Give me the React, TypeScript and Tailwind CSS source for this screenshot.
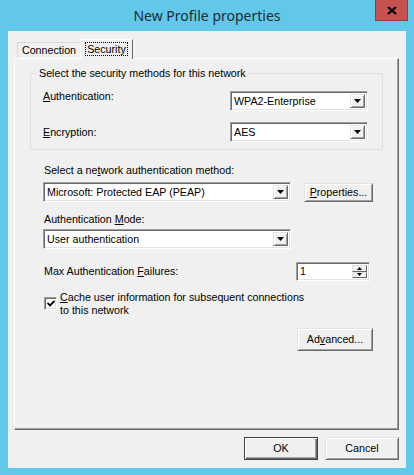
import React from "react";

const font = { fontFamily: '"Liberation Sans", Arial, sans-serif' };

function Arrow() {
  return (
    <svg width="7" height="4" viewBox="0 0 7 4">
      <path d="M0 0h7L3.5 4z" fill="#000" />
    </svg>
  );
}

function DropBtn() {
  return (
    <div className="w-[15px] h-full flex items-center justify-center bg-[#f0f0f0] border border-t-[#e3e3e3] border-l-[#e3e3e3] border-b-[#696969] border-r-[#696969] shadow-[inset_1px_1px_0_#fff,inset_-1px_-1px_0_#a0a0a0]">
      <Arrow />
    </div>
  );
}

function Combo({ text, w }: { text: string; w: string }) {
  return (
    <div
      className={`${w} h-[20px] flex items-stretch bg-white border border-t-[#a0a0a0] border-l-[#a0a0a0] border-b-white border-r-white shadow-[inset_1px_1px_0_#696969,inset_-1px_-1px_0_#e3e3e3] p-[2px]`}
    >
      <div className="flex-1 flex items-center pl-[1px] text-[10.7px] text-black leading-none">{text}</div>
      <DropBtn />
    </div>
  );
}

function Btn({ children, w, h, def }: { children: React.ReactNode; w: string; h: string; def?: boolean }) {
  return (
    <div
      className={`${w} ${h} flex items-center justify-center text-[10.7px] text-black bg-[#f0f0f0] border ${
        def
          ? "border-[#404040] shadow-[inset_1px_1px_0_#fff,inset_-1px_-1px_0_#696969,inset_-2px_-2px_0_#a0a0a0]"
          : "border-t-[#e3e3e3] border-l-[#e3e3e3] border-b-[#696969] border-r-[#696969] shadow-[inset_1px_1px_0_#fff,inset_-1px_-1px_0_#a0a0a0]"
      }`}
    >
      {children}
    </div>
  );
}

export default function App() {
  return (
    <div className="w-[414px] h-[475px] bg-[#62c8ea] flex flex-col overflow-hidden" style={font}>
      {/* title bar */}
      <div className="h-[31px] flex items-start relative">
        <div className="flex-1 text-center pt-[5px] text-[14px] text-[#1b2b33]" style={{ fontFamily: '"Noto Sans", "Open Sans", sans-serif' }}>
          New Profile properties
        </div>
        <div className="absolute right-[6px] top-0 w-[33px] h-[21px] bg-[#c75050] border border-[#9e3b3b] border-t-0 flex items-center justify-center">
          <svg width="10" height="9" viewBox="0 0 10 9">
            <path d="M1 1l8 7M9 1L1 8" stroke="#000" strokeWidth="2.2" />
          </svg>
        </div>
      </div>

      {/* client area */}
      <div className="mx-[8px] h-[437px] bg-[#f0f0f0] flex flex-col">
        {/* tabs */}
        <div className="flex items-end h-[27px] pl-[9px] pt-[8px]">
          <div className="w-[64px] h-[16px] bg-[#f0f0f0] border border-b-0 border-t-[#d9d9d9] border-l-[#d9d9d9] border-r-[#a0a0a0] flex items-center justify-center text-[10.7px] text-black">
            Connection
          </div>
          <div className="relative z-10 w-[53px] h-[20px] -mb-[1px] -ml-[1px] bg-[#f0f0f0] border border-b-0 border-t-white border-l-white border-r-[#696969] flex items-start justify-center pt-[2px]">
            <span className="text-[10.7px] text-black leading-[12px] px-[1px] border border-dotted border-black">Security</span>
          </div>
        </div>

        {/* panel */}
        <div className="ml-[6px] w-[385px] h-[372px] bg-[#f0f0f0] border border-t-white border-l-white border-b-[#696969] border-r-[#696969] shadow-[inset_-1px_-1px_0_#a0a0a0] flex flex-col text-[10.7px] text-black">
          {/* group box */}
          <div className="relative mt-[14px] ml-[15px] w-[353px] h-[77px] border border-[#d5dfe5] rounded-[2px] flex flex-col">
            <div className="absolute -top-[7px] left-[6px] px-[2px] bg-[#f0f0f0] leading-[13px]">
              Select the security methods for this network
            </div>
            <div className="flex items-center mt-[17px] h-[20px]">
              <span className="ml-[12px] flex-1 -mt-[10px]">
                <u>A</u>uthentication:
              </span>
              <div className="mr-[14px]">
                <Combo text="WPA2-Enterprise" w="w-[138px]" />
              </div>
            </div>
            <div className="flex items-center mt-[11px] h-[20px]">
              <span className="ml-[12px] flex-1">
                <u>E</u>ncryption:
              </span>
              <div className="mr-[14px]">
                <Combo text="AES" w="w-[138px]" />
              </div>
            </div>
          </div>

          <div className="ml-[29px] mt-[14px] leading-[13px]">
            Select a ne<u>t</u>work authentication method:
          </div>
          <div className="flex items-center ml-[28px] mt-[5px]">
            <Combo text="Microsoft: Protected EAP (PEAP)" w="w-[248px]" />
            <div className="ml-[13px]">
              <Btn w="w-[69px]" h="h-[19px]">
                <span>
                  <u>P</u>roperties...
                </span>
              </Btn>
            </div>
          </div>

          <div className="ml-[29px] mt-[11px] leading-[13px]">
            Authentication <u>M</u>ode:
          </div>
          <div className="ml-[28px] mt-[3px]">
            <Combo text="User authentication" w="w-[248px]" />
          </div>

          <div className="flex items-center mt-[13px] h-[19px]">
            <span className="ml-[29px] flex-1">
              Max Authentication <u>F</u>ailures:
            </span>
            <div className="mr-[28px] w-[74px] h-[19px] flex items-stretch bg-white border border-t-[#a0a0a0] border-l-[#a0a0a0] border-b-white border-r-white shadow-[inset_1px_1px_0_#696969,inset_-1px_-1px_0_#e3e3e3] p-[2px]">
              <div className="flex-1 flex items-center pl-[1px] leading-none">1</div>
              <div className="w-[15px] flex flex-col">
                <div className="flex-1 flex items-center justify-center bg-[#f0f0f0] border border-t-[#e3e3e3] border-l-[#e3e3e3] border-b-[#696969] border-r-[#696969]">
                  <svg width="5" height="3" viewBox="0 0 5 3"><path d="M2.5 0L5 3H0z" fill="#000" /></svg>
                </div>
                <div className="flex-1 flex items-center justify-center bg-[#f0f0f0] border border-t-[#e3e3e3] border-l-[#e3e3e3] border-b-[#696969] border-r-[#696969]">
                  <svg width="5" height="3" viewBox="0 0 5 3"><path d="M0 0h5L2.5 3z" fill="#000" /></svg>
                </div>
              </div>
            </div>
          </div>

          <div className="flex items-start ml-[29px] mt-[16px]">
            <div className="w-[13px] h-[13px] bg-white border border-t-[#a0a0a0] border-l-[#a0a0a0] border-b-white border-r-white shadow-[inset_1px_1px_0_#696969,inset_-1px_-1px_0_#e3e3e3] flex items-center justify-center">
              <svg width="8" height="7" viewBox="0 0 8 7">
                <path d="M0.5 3l2.5 2.5L7.5 1" stroke="#000" strokeWidth="1.8" fill="none" />
              </svg>
            </div>
            <div className="ml-[3px] leading-[13px] -mt-[6px]">
              <u>C</u>ache user information for subsequent connections
              <br />
              to this network
            </div>
          </div>

          <div className="flex justify-end mr-[25px] mt-[11px]">
            <Btn w="w-[76px]" h="h-[23px]">
              <span>
                Ad<u>v</u>anced...
              </span>
            </Btn>
          </div>
        </div>

        {/* bottom buttons */}
        <div className="flex justify-end gap-[7px] mt-[7px] mr-[7px]">
          <Btn w="w-[74px]" h="h-[23px]" def>
            OK
          </Btn>
          <Btn w="w-[74px]" h="h-[23px]">
            Cancel
          </Btn>
        </div>
      </div>
    </div>
  );
}
